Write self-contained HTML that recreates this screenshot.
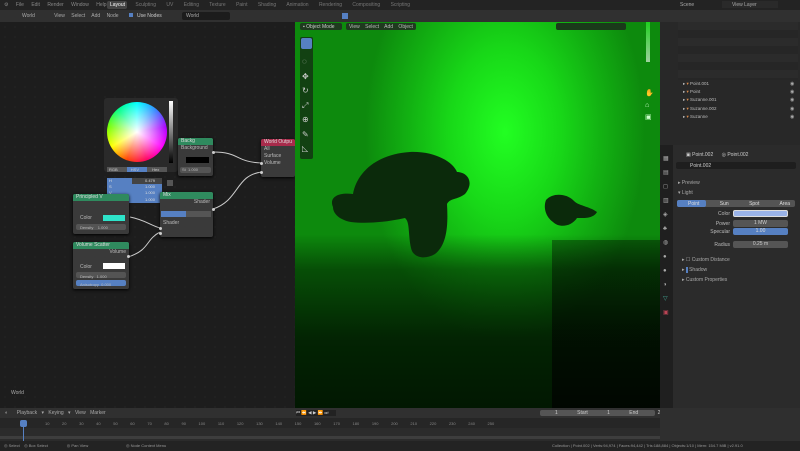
<!DOCTYPE html>
<html><head><style>
*{margin:0;padding:0;box-sizing:border-box}
body{width:800px;height:451px;overflow:hidden;background:#1d1d1d;font-family:"Liberation Sans",sans-serif;font-size:5px;color:#bbb;position:relative}
.a{position:absolute}
.node{position:absolute;background:#3a3a3a;border-radius:2px;box-shadow:0 1px 3px #000}
.nh{height:7px;background:#2f8a5e;border-radius:2px 2px 0 0;color:#ddd;padding-left:3px;line-height:7px}
.row{height:7px;line-height:7px;padding:0 3px}
.fld{position:absolute;background:#545454;border-radius:2px;height:6px}
.sock{position:absolute;width:3px;height:3px;border-radius:50%;background:#ccc}
</style></head><body>
<div class="a" style="left:0;top:0;width:800px;height:10px;background:#232323"></div>
<div class="a" style="left:4px;top:2px;color:#888;word-spacing:6px">⚙ File Edit Render Window Help</div>
<div class="a" style="left:107px;top:1px;width:20px;height:8px;background:#444;border-radius:2px"></div>
<div class="a" style="left:110px;top:2px;word-spacing:9px;color:#777">Layout Sculpting UV Editing Texture Paint Shading Animation Rendering Compositing Scripting</div>
<div class="a" style="left:110px;top:2px;color:#eee">Layout</div>
<div class="a" style="left:680px;top:2px;color:#aaa">Scene</div>
<div class="a" style="left:722px;top:1px;width:56px;height:7px;background:#2a2a2a"></div>
<div class="a" style="left:732px;top:2px;color:#aaa">View Layer</div>
<div class="a" style="left:0;top:10px;width:295px;height:12px;background:#303030"></div>
<div class="a" style="left:22px;top:13px;color:#aaa;word-spacing:5px">World &nbsp; View Select Add Node</div>
<div class="a" style="left:129px;top:13px;width:4px;height:4px;background:#5680c2"></div>
<div class="a" style="left:137px;top:13px;color:#ccc">Use Nodes</div>
<div class="a" style="left:182px;top:12px;width:48px;height:8px;background:#1c1c1c;border-radius:2px"></div>
<div class="a" style="left:186px;top:13px;color:#aaa">World</div>
<div class="a" style="left:295px;top:10px;width:365px;height:12px;background:#303030"></div>
<div class="a" style="left:342px;top:13px;width:6px;height:6px;background:#5680c2"></div>
<div class="a" style="left:0;top:22px;width:295px;height:386px;background-color:#1d1d1d;background-image:radial-gradient(#2c2c2c 0.7px,transparent 0.8px);background-size:10px 10px"></div>
<div class="a" style="left:11px;top:390px;color:#aaa">World</div>
<svg class="a" style="left:0;top:0" width="295" height="408">
<g stroke="#ccc" stroke-width="1" fill="none">
<path d="M213 152 C240 152 235 162 262 163"/>
<path d="M213 209 C240 200 235 175 262 172"/>
<path d="M128 257 C150 250 145 240 160 232"/>
<path d="M130 217 C145 220 150 225 160 228"/>
</g></svg>
<div class="a" style="left:104px;top:98px;width:74px;height:74px;background:#2a2a2a;border-radius:3px"></div>
<div class="a" style="left:107px;top:102px;width:60px;height:60px;border-radius:50%;background:radial-gradient(circle,#fff 0%,rgba(255,255,255,0) 70%),conic-gradient(from 0deg,#0ff,#38f,#a0f,#f0f,#f06,#f40,#ff0,#7f0,#0f8,#0ff)"></div>
<div class="a" style="left:169px;top:101px;width:4px;height:62px;background:linear-gradient(#fff,#000)"></div>
<div class="a" style="left:107px;top:167px;width:60px;height:5px;background:#555"></div>
<div class="a" style="left:127px;top:167px;width:20px;height:5px;background:#5680c2"></div>
<div class="a" style="left:109px;top:167px;color:#ccc;font-size:4px;word-spacing:12px">RGB HSV Hex</div>
<div class="a" style="left:107px;top:178px;width:55px;height:25px;background:#5680c2"></div>
<div class="a" style="left:132px;top:178px;width:30px;height:6px;background:#444"></div>
<div class="a" style="left:167px;top:180px;width:6px;height:6px;background:#555"></div>
<div class="a" style="left:109px;top:178px;color:#ddd;font-size:4px;line-height:6.2px">H<br>S<br>V<br>A</div>
<div class="a" style="left:145px;top:178px;color:#ddd;font-size:4px;line-height:6.2px">0.479<br>1.000<br>1.000<br>1.000</div>
<div class="node" style="left:178px;top:138px;width:35px;height:38px"><div class="nh">Backg</div><div class="row">Background</div></div>
<div class="a" style="left:186px;top:157px;width:23px;height:6px;background:#000"></div>
<div class="fld" style="left:180px;top:167px;width:31px"></div>
<div class="a" style="left:182px;top:167px;font-size:4px">St &nbsp;1.000</div>
<div class="sock" style="left:212px;top:151px"></div>
<div class="node" style="left:261px;top:139px;width:34px;height:38px"><div class="nh" style="background:#a82b4b">World Outpu</div><div class="row">All</div><div class="row">Surface</div><div class="row">Volume</div></div>
<div class="sock" style="left:260px;top:162px"></div><div class="sock" style="left:260px;top:171px"></div>
<div class="node" style="left:160px;top:192px;width:53px;height:45px"><div class="nh">Mix</div><div class="row" style="text-align:right">Shader</div><div class="row"></div><div class="row">Shader</div><div class="row">Shader</div></div>
<div class="a" style="left:161px;top:211px;width:50px;height:6px;background:#555"></div>
<div class="a" style="left:161px;top:211px;width:25px;height:6px;background:#5680c2"></div>
<div class="sock" style="left:212px;top:208px"></div><div class="sock" style="left:159px;top:227px"></div><div class="sock" style="left:159px;top:232px"></div>
<div class="node" style="left:73px;top:194px;width:56px;height:40px"><div class="nh">Principled V</div></div>
<div class="a" style="left:80px;top:215px">Color</div>
<div class="a" style="left:103px;top:215px;width:22px;height:6px;background:#2ee3c9"></div>
<div class="fld" style="left:76px;top:224px;width:50px"></div>
<div class="a" style="left:80px;top:225px;font-size:4px">Density &nbsp;&nbsp;&nbsp;1.000</div>
<div class="node" style="left:73px;top:242px;width:56px;height:47px"><div class="nh">Volume Scatter</div><div class="row" style="text-align:right">Volume</div></div>
<div class="a" style="left:80px;top:264px">Color</div>
<div class="a" style="left:103px;top:263px;width:22px;height:6px;background:#fff"></div>
<div class="fld" style="left:76px;top:272px;width:50px"></div>
<div class="fld" style="left:76px;top:280px;width:50px;background:#5680c2"></div>
<div class="a" style="left:80px;top:273px;font-size:4px;line-height:8px">Density &nbsp;&nbsp;1.000<br>Anisotropy &nbsp;0.000</div>
<div class="sock" style="left:127px;top:255px"></div>
<!-- viewport -->
<div class="a" style="left:295px;top:22px;width:365px;height:386px;background:linear-gradient(180deg,rgba(0,0,0,0) 0%,rgba(0,0,0,0) 55%,rgba(0,20,0,.5) 64%,rgba(0,10,0,.8) 82%,rgba(0,8,0,.88) 100%),radial-gradient(ellipse 140px 210px at 210px 110px,#22ff22 0%,#18d818 40%,#12b012 70%,#0d8a0d 100%);background-color:#0c7a0c"></div>
<div class="a" style="left:552px;top:240px;width:108px;height:168px;background:linear-gradient(180deg,rgba(0,0,0,.35),rgba(0,0,0,.7))"></div>
<svg class="a" style="left:295px;top:22px" width="365" height="386">
<g fill="#0b2a0b">
<path d="M38 185 C34 176 42 170 58 172 C62 150 82 132 115 130 C140 129 158 140 162 150 C172 150 180 160 170 172 C162 178 155 176 152 182 C153 200 153 222 140 232 C130 238 118 236 116 226 C113 212 115 200 110 196 C92 200 72 202 56 200 C45 198 38 192 38 185Z"/>
<path d="M251 178 C258 170 272 172 278 178 C283 184 294 184 302 190 C298 197 288 196 282 196 C276 205 264 206 258 200 C251 195 248 186 251 178Z"/>
</g></svg>
<div class="a" style="left:300px;top:23px;width:42px;height:7px;background:#1f3a1f;border-radius:2px"></div>
<div class="a" style="left:303px;top:24px;color:#ccc">▪ Object Mode</div>
<div class="a" style="left:346px;top:23px;width:70px;height:7px;background:#1f3a1f;border-radius:2px"></div>
<div class="a" style="left:349px;top:24px;color:#bbb;word-spacing:4px">View Select Add Object</div>
<div class="a" style="left:556px;top:23px;width:70px;height:7px;background:#1a3a1a;border-radius:2px"></div>
<div class="a" style="left:300px;top:37px;width:13px;height:122px;background:rgba(20,40,20,.75);border-radius:2px"></div>
<div class="a" style="left:301px;top:38px;width:11px;height:11px;background:#5680c2;border-radius:2px"></div>
<div class="a" style="left:302px;top:55px;color:#ccc;line-height:14.5px;font-size:8px">◌<br>✥<br>↻<br>⤢<br>⊕<br>✎<br>◺</div>
<div class="a" style="left:646px;top:22px;width:4px;height:40px;background:linear-gradient(#1fd01f,#9fd09f)"></div>
<div class="a" style="left:645px;top:88px;width:9px;height:35px;color:#cfc;font-size:7px;line-height:12px">✋<br>⌂<br>▣</div>
<!-- outliner -->
<div class="a" style="left:660px;top:10px;width:140px;height:135px;background:#282828"></div>
<div class="a" style="left:660px;top:10px;width:140px;height:12px;background:#303030"></div>
<div class="a" style="left:678px;top:22px;width:120px;height:58px;background:repeating-linear-gradient(180deg,#2b2b2b 0 8px,#262626 8px 16px)"></div>
<div class="a" style="left:683px;top:80px;color:#bbb;line-height:8.2px;font-size:4.5px">▸ <span style="color:#d9894a">▾</span> Point.001<br>▸ <span style="color:#d9894a">▾</span> Point<br>▸ <span style="color:#d9894a">▾</span> Suzanne.001<br>▸ <span style="color:#d9894a">▾</span> Suzanne.002<br>▸ <span style="color:#d9894a">▾</span> Suzanne</div>
<div class="a" style="left:790px;top:80px;color:#aaa;line-height:8.2px;font-size:5px">◉<br>◉<br>◉<br>◉<br>◉</div>
<div class="a" style="left:660px;top:145px;width:140px;height:263px;background:#2b2b2b"></div>
<div class="a" style="left:660px;top:145px;width:13px;height:263px;background:#1f1f1f"></div>
<div class="a" style="left:663px;top:152px;color:#aaa;font-size:6px;line-height:14px">▦<br>▤<br>◻<br>▥<br>◈<br>♣<br>◍<br>●<br>●<br>◑<br><span style="color:#4a9">▽</span><br><span style="color:#b45">▣</span></div>
<div class="a" style="left:686px;top:152px;color:#ccc">▣ Point.002 &nbsp;&nbsp;&nbsp;&nbsp; ◎ Point.002</div>
<div class="a" style="left:676px;top:162px;width:120px;height:7px;background:#1e1e1e;border-radius:2px"></div>
<div class="a" style="left:690px;top:163px;color:#ccc">Point.002</div>
<div class="a" style="left:678px;top:178px;color:#aaa;line-height:10px">▸ Preview<br>▾ Light</div>
<div class="a" style="left:677px;top:200px;width:118px;height:7px;background:#545454;border-radius:2px"></div>
<div class="a" style="left:677px;top:200px;width:29px;height:7px;background:#5680c2;border-radius:2px"></div>
<div class="a" style="left:688px;top:201px;color:#ddd;word-spacing:19px">Point Sun Spot Area</div>
<div class="a" style="left:700px;top:211px;color:#bbb;width:30px;text-align:right">Color</div>
<div class="a" style="left:700px;top:221px;color:#bbb;width:30px;text-align:right">Power</div>
<div class="a" style="left:700px;top:229px;color:#bbb;width:30px;text-align:right">Specular</div>
<div class="a" style="left:700px;top:242px;color:#bbb;width:30px;text-align:right">Radius</div>
<div class="a" style="left:733px;top:210px;width:55px;height:7px;background:#9ab3e8;border:1px solid #ddd;border-radius:2px"></div>
<div class="a" style="left:733px;top:220px;width:55px;height:7px;background:#555;border-radius:2px;text-align:center;color:#ccc">1 MW</div>
<div class="a" style="left:733px;top:228px;width:55px;height:7px;background:#5680c2;border-radius:2px;text-align:center;color:#ddd">1.00</div>
<div class="a" style="left:733px;top:241px;width:55px;height:7px;background:#555;border-radius:2px;text-align:center;color:#ccc">0.25 m</div>
<div class="a" style="left:682px;top:255px;color:#aaa;line-height:10px">▸ ☐ Custom Distance<br>▸ <span style="background:#5680c2;color:#5680c2">▪</span> Shadow<br>▸ Custom Properties</div>
<!-- timeline -->
<div class="a" style="left:0;top:408px;width:660px;height:10px;background:#303030"></div>
<div class="a" style="left:5px;top:410px;color:#aaa;word-spacing:3px">◐ &nbsp;Playback ▾ Keying ▾ View Marker</div>
<div class="a" style="left:296px;top:410px;width:40px;height:6px;background:#222;color:#ccc;font-size:4.5px">⏮ ⏪ ◀ ▶ ⏩ ⏭</div>
<div class="a" style="left:540px;top:410px;width:115px;height:6px;background:#555;border-radius:2px"></div>
<div class="a" style="left:555px;top:410px;color:#ccc;word-spacing:18px">1 Start 1 End 250</div>
<div class="a" style="left:0;top:418px;width:660px;height:10px;background:#262626"></div>
<div class="a" style="left:20px;top:420px;width:7px;height:7px;background:#5680c2;border-radius:2px"></div>
<div class="a" style="left:45px;top:421px;color:#888;font-size:4px;word-spacing:11.5px">10 20 30 40 50 60 70 80 90 100 110 120 130 140 150 160 170 180 190 200 210 220 230 240 250</div>
<div class="a" style="left:0;top:428px;width:660px;height:13px;background:#2b2b2b"></div>
<div class="a" style="left:0;top:436px;width:660px;height:3px;background:#3d3d3d"></div>
<div class="a" style="left:23px;top:427px;width:1px;height:14px;background:#5680c2"></div>
<div class="a" style="left:660px;top:408px;width:140px;height:33px;background:#2f2f2f"></div>
<div class="a" style="left:0;top:441px;width:800px;height:10px;background:#232323"></div>
<div class="a" style="left:4px;top:443px;color:#999;font-size:4px">◎ Select &nbsp;&nbsp; ◎ Box Select &nbsp;&nbsp;&nbsp;&nbsp;&nbsp;&nbsp;&nbsp;&nbsp;&nbsp;&nbsp;&nbsp;&nbsp;&nbsp;&nbsp;&nbsp; ◎ Pan View &nbsp;&nbsp;&nbsp;&nbsp;&nbsp;&nbsp;&nbsp;&nbsp;&nbsp;&nbsp;&nbsp;&nbsp;&nbsp;&nbsp;&nbsp;&nbsp;&nbsp;&nbsp;&nbsp;&nbsp;&nbsp;&nbsp;&nbsp;&nbsp;&nbsp;&nbsp;&nbsp;&nbsp;&nbsp;&nbsp;&nbsp;&nbsp; ◎ Node Context Menu</div>
<div class="a" style="left:552px;top:443px;color:#999;font-size:4px;white-space:nowrap">Collection | Point.002 | Verts:94,974 | Faces:94,442 | Tris:188,884 | Objects:1/10 | Mem: 154.7 MiB | v2.91.0</div>
</body></html>
